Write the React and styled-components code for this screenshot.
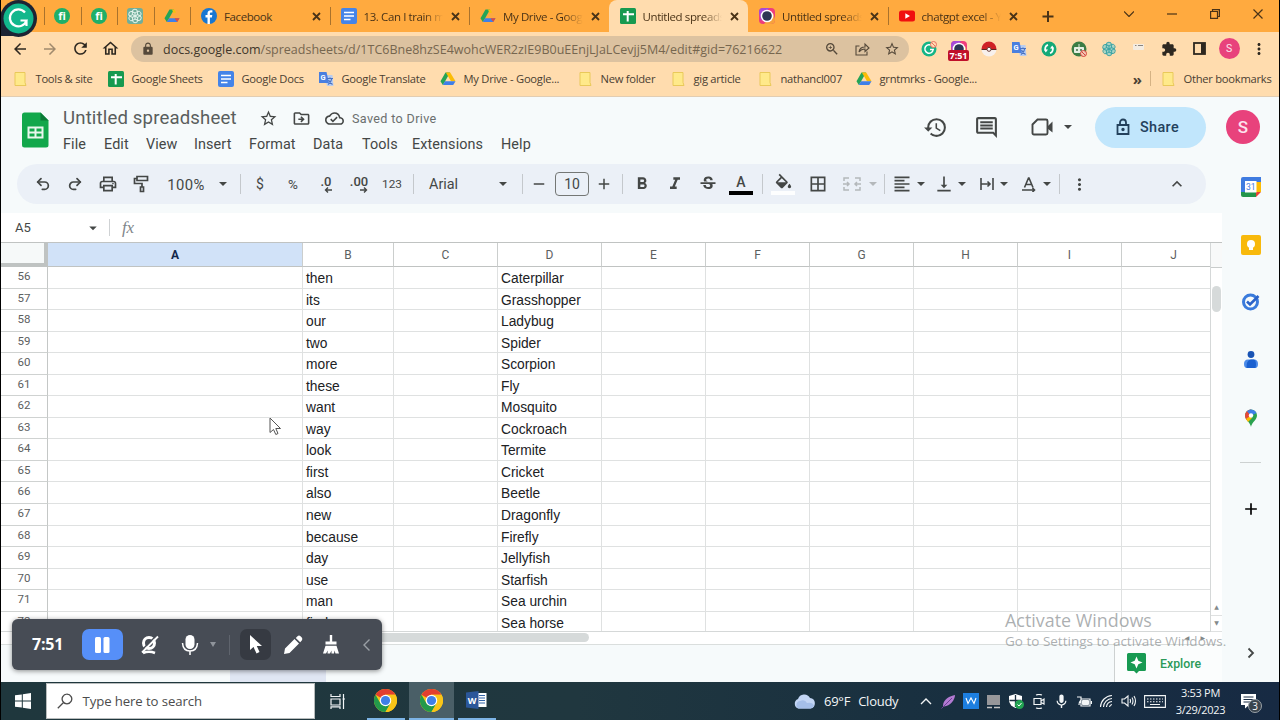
import React from "react";
import styled, { createGlobalStyle, css } from "styled-components";
import {
  MdArrowBack,
  MdArrowForward,
  MdRefresh,
  MdOutlineHome,
  MdLock,
  MdZoomIn,
  MdStarBorder,
  MdExtension,
  MdMoreVert,
  MdOutlineDriveFileMove,
  MdOutlineCloudDone,
  MdHistory,
  MdOutlineComment,
  MdOutlinePrint,
  MdFormatBold,
  MdFormatItalic,
  MdStrikethroughS,
  MdBorderAll,
  MdFormatAlignLeft,
  MdVerticalAlignBottom,
  MdKeyboardArrowUp,
  MdArrowDropDown,
  MdAdd,
  MdRemove,
  MdMic,
} from "react-icons/md";
import { Undo2, Redo2 } from "lucide-react";

const GlobalStyle = createGlobalStyle`
  * { box-sizing: border-box; }
  body {
    margin: 0;
    overflow: hidden;
    font-family: "Open Sans", "Noto Sans", sans-serif;
  }
  svg { display: block; flex-shrink: 0; }
`;

const Frame = styled.div`
  position: relative;
  display: flex;
  flex-direction: column;
  width: 1280px;
  height: 720px;
  overflow: hidden;
  border-left: 1px solid #000;
  border-right: 1px solid #000;
  background: #f6fafb;
`;

/* ---------- browser ---------- */

const TabStrip = styled.div`
  display: flex;
  height: 32px;
  padding-left: 43px;
  background: #ffaa3f;
  color: #4a3317;
`;

const tabBase = css`
  display: flex;
  align-items: center;
  position: relative;
  height: 32px;
  &::before {
    content: "";
    width: 1px;
    height: 18px;
    background: ${(p) => (p.$noLine ? "transparent" : "#a9722c")};
  }
`;

const PinnedTab = styled.div`
  ${tabBase}
  width: 36.5px;
  gap: 9px;
`;

const Tab = styled.div`
  ${tabBase}
  width: 139.5px;
  padding-right: 9px;
  border-radius: 8px 8px 0 0;
  background: ${(p) => (p.$active ? "#ffdcae" : "transparent")};
  svg:first-child {
    margin-left: 10px;
  }
`;

const TabTitle = styled.span`
  flex: 1;
  margin: 0 8px 0 7px;
  overflow: hidden;
  white-space: nowrap;
  font-size: 11.5px;
  letter-spacing: -0.4px;
  mask-image: ${(p) =>
    p.$fade ? "linear-gradient(90deg, #000 76%, transparent 100%)" : "none"};
`;

const NewTab = styled.div`
  display: flex;
  align-items: center;
  width: 80px;
  svg {
    margin-left: 11px;
  }
`;

const WindowButtons = styled.div`
  display: flex;
  align-items: center;
  height: 27px;
  margin-left: auto;
`;

const WindowButton = styled.span`
  display: flex;
  justify-content: center;
  width: 43px;
`;

const AddressRow = styled.div`
  display: flex;
  align-items: center;
  height: 33px;
  padding-left: 4px;
  background: #ffdcae;
  color: #2e2820;
`;

const NavButton = styled.span`
  display: flex;
  justify-content: center;
  width: 30px;
  opacity: ${(p) => (p.$off ? 0.45 : 1)};
`;

const UrlBar = styled.div`
  display: flex;
  align-items: center;
  width: 778px;
  height: 26px;
  margin: 1px 5px 0 6px;
  padding: 0 2px 0 10px;
  border-radius: 13px;
  background: #dcc2a0;
  color: #55493a;
`;

const Url = styled.span`
  flex: 1;
  margin-left: 8px;
  white-space: nowrap;
  font-size: 12.5px;
  color: #76664f;
  b {
    font-weight: 400;
    color: #40362a;
  }
`;

const RecBadge = styled.span`
  position: absolute;
  left: -3px;
  top: 9px;
  width: 21px;
  height: 11px;
  border-radius: 2px;
  background: #c0102a;
  color: #fff;
  font-size: 9px;
  font-weight: 700;
  line-height: 11px;
  text-align: center;
`;

const BadgeHost = styled.span`
  position: relative;
`;

const Avatar = styled.span`
  display: flex;
  align-items: center;
  justify-content: center;
  width: ${(p) => p.$size}px;
  height: ${(p) => p.$size}px;
  border-radius: 50%;
  background: #e8427c;
  color: #fde4ee;
  font-family: Roboto, sans-serif;
  font-size: ${(p) => p.$size / 2}px;
  font-weight: ${(p) => (p.$size > 30 ? 500 : 400)};
`;

const BookmarkRow = styled.div`
  display: flex;
  align-items: center;
  height: 32px;
  padding: 0 5px 4px 11px;
  border-bottom: 1px solid #e2cdb2;
  background: #ffdcae;
  color: #4a4032;
`;

const Bookmark = styled.span`
  display: flex;
  align-items: center;
  gap: 7.5px;
  width: ${(p) => p.$w}px;
  white-space: nowrap;
  font-size: 11.2px;
  letter-spacing: -0.26px;
`;

const Chevrons = styled.span`
  margin-left: auto;
  margin-right: 8px;
  font-size: 15px;
  font-weight: 700;
`;

const BookmarkDivider = styled.span`
  width: 1px;
  height: 15px;
  margin-right: 9px;
  background: #d5b284;
`;

/* ---------- sheet header ---------- */

const Header = styled.header`
  display: flex;
  height: 67px;
  padding: 9px 19px 0 21px;
  color: #444746;
  font-family: Roboto, sans-serif;
`;

const LogoBox = styled.div`
  margin-top: -1px;
`;

const TitleBlock = styled.div`
  margin-left: 14px;
`;

const TitleRow = styled.div`
  display: flex;
  align-items: center;
  height: 24px;
`;

const DocTitle = styled.span`
  width: 196px;
  white-space: nowrap;
  font-size: 18.6px;
  letter-spacing: 0.15px;
  color: #5a5e5d;
`;

const TitleIcon = styled.span`
  width: 33px;
`;

const Saved = styled.span`
  margin: 1px 0 0 -6px;
  font-size: 12.6px;
  letter-spacing: 0.34px;
  color: #6b6f6e;
`;

const MenuRow = styled.nav`
  display: flex;
  margin-top: 5px;
  line-height: 20px;
  font-size: 14.4px;
`;

const MenuItem = styled.span`
  width: ${(p) => p.$w}px;
  letter-spacing: 0.1px;
`;

const HeaderActions = styled.div`
  display: flex;
  align-items: center;
  height: 42px;
  margin-left: auto;
`;

const ActionIcon = styled.span`
  display: flex;
  justify-content: center;
  align-items: center;
  width: 51px;
`;

const MeetIcon = styled(ActionIcon)`
  width: 73px;
  margin-right: 10px;
  padding-left: 6px;
  gap: 9px;
`;

const ShareButton = styled.button`
  display: flex;
  align-items: center;
  justify-content: center;
  gap: 9px;
  width: 111px;
  height: 41px;
  margin-right: 20px;
  padding: 0 7px 0 0;
  border: 0;
  border-radius: 21px;
  background: #c1e6fc;
  color: #23415c;
  font-family: Roboto, sans-serif;
  font-size: 14.4px;
  font-weight: 500;
  letter-spacing: 0.4px;
`;

const Body = styled.div`
  display: flex;
  flex: 1;
  min-height: 0;
`;

const Main = styled.main`
  display: flex;
  flex-direction: column;
  width: 1221px;
`;

/* ---------- toolbar ---------- */

const Toolbar = styled.div`
  display: flex;
  align-items: center;
  flex-shrink: 0;
  width: 1189px;
  height: 40px;
  margin: 0 0 9px 16px;
  padding: 0 14px 0 10px;
  border-radius: 20px;
  background: #ebf0f7;
  color: #444746;
  font-family: Roboto, sans-serif;
`;

const Tool = styled.span`
  display: flex;
  align-items: center;
  justify-content: center;
  flex-shrink: 0;
  width: ${(p) => p.$w}px;
  margin-left: ${(p) => p.$ml || 0}px;
  font-size: ${(p) => p.$size || 13}px;
  font-weight: ${(p) => p.$weight || 400};
  color: ${(p) => (p.$off ? "#b4b8bb" : "inherit")};
`;

const CollapseTool = styled(Tool)`
  margin-left: auto;
`;

const ToolDivider = styled(Tool)`
  &::before {
    content: "";
    width: 1px;
    height: 20px;
    background: #c4c8cc;
  }
`;

const ZoomLevel = styled(Tool)`
  padding-top: 2px;
  letter-spacing: 0.4px;
`;

const FontName = styled(Tool)`
  justify-content: flex-start;
  padding-left: 6px;
`;

const FontSize = styled.span`
  width: 34px;
  height: 24px;
  margin-left: 10px;
  border: 1px solid #747775;
  border-radius: 4px;
  line-height: 23px;
  text-align: center;
  font-size: 14px;
`;

const Decimals = styled.span`
  display: flex;
  flex-direction: column;
  align-items: flex-end;
  line-height: 11px;
  font-size: 13px;
  font-weight: 500;
`;

const ColorBar = styled.span`
  display: flex;
  flex-direction: column;
  align-items: center;
  font-size: 14px;
  font-weight: 500;
  line-height: 16px;
  &::after {
    content: "";
    width: 24px;
    height: 4px;
    margin-top: 1px;
    background: ${(p) => p.$color};
  }
`;

/* ---------- formula bar and grid ---------- */

const FormulaBar = styled.div`
  display: flex;
  align-items: center;
  flex-shrink: 0;
  height: 29px;
  padding-left: 14px;
  background: #fff;
  font-family: Roboto, sans-serif;
  font-size: 13px;
  color: #444746;
`;

const CellName = styled.span`
  width: 69px;
`;

const Fx = styled.i`
  margin-left: 7px;
  padding-left: 12px;
  border-left: 1px solid #cfd2d4;
  line-height: 17px;
  font-family: "Liberation Serif", serif;
  font-size: 17px;
  letter-spacing: -0.2px;
  color: #80868b;
`;

const GridArea = styled.div`
  display: flex;
  height: 390px;
  border-top: 1px solid #c0c3c2;
  background: #fff;
`;

const Grid = styled.div`
  width: 1210px;
  overflow: hidden;
  border-right: 1px solid #d5d8d8;
  border-bottom: 1px solid #d5d8d8;
`;

const columns = "47px 255px 91px 104px 104px 104px 104px 104px 104px 104px 104px";

const HeadRow = styled.div`
  display: grid;
  grid-template-columns: ${columns};
  grid-template-rows: 24px;
  height: 24px;
  font-family: Roboto, sans-serif;
  font-size: 12px;
`;

const Corner = styled.div`
  border-right: 4px solid #bfc3c2;
  border-bottom: 4px solid #bfc3c2;
  background: #f6f9f9;
`;

const HeadCell = styled.div`
  border-right: 1px solid #cbcecd;
  border-bottom: 1px solid #c0c3c2;
  background: ${(p) => (p.$selected ? "#d1e2f8" : "#fff")};
  color: ${(p) => (p.$selected ? "#12284a" : "#5c605f")};
  font-weight: ${(p) => (p.$selected ? 700 : 400)};
  line-height: 25px;
  text-align: center;
`;

const Row = styled.div`
  display: grid;
  grid-template-columns: ${columns};
  grid-template-rows: 21.56px;
  height: 21.56px;
`;

const RowNumber = styled.div`
  border-right: 1px solid #c4c7c6;
  border-bottom: 1px solid #cfd2d1;
  color: #5c605f;
  font-family: Roboto, sans-serif;
  font-size: 11.5px;
  line-height: 19px;
  text-align: center;
`;

const Cell = styled.div`
  padding-left: 3px;
  border-right: 1px solid #dfe1e1;
  border-bottom: 1px solid #dfe1e1;
  color: #202124;
  font-family: "Liberation Sans", Arial, sans-serif;
  font-size: 13.8px;
  line-height: 23.4px;
  white-space: nowrap;
`;

const ScrollTrack = styled.div`
  display: flex;
  flex-direction: column;
  align-items: center;
  width: 11px;
  &::before {
    content: "";
    width: 11px;
    height: 24px;
    border-bottom: 1px solid #c9cccb;
    background: #f8f9f9;
  }
`;

const ScrollThumb = styled.div`
  width: 9px;
  height: 26px;
  margin-top: 18px;
  border-radius: 5px;
  background: #d6dada;
`;

const ScrollArrow = styled.div`
  width: 11px;
  height: 16px;
  margin-top: ${(p) => (p.$first ? "auto" : 0)};
  border-bottom: 1px solid #dfe1e1;
  color: #83898a;
  line-height: 13px;
  text-align: center;
  font-family: "DejaVu Sans", sans-serif;
  font-size: 6px;
`;

const HScroll = styled.div`
  display: flex;
  justify-content: space-between;
  height: 13px;
  padding: 1px 17px 0 50px;
  border-bottom: 1px solid #dadedd;
  background: #fff;
`;

const HThumb = styled.div`
  width: 538px;
  height: 9px;
  border-radius: 5px;
  background: #d6dada;
`;

const HArrows = styled.span`
  color: #83898a;
  font-family: "DejaVu Sans", sans-serif;
  font-size: 6px;
  line-height: 9px;
  word-spacing: 9px;
`;

const SheetBar = styled.div`
  display: flex;
  flex: 1;
  align-items: flex-end;
  justify-content: space-between;
  padding-left: 229px;
`;

const SheetTab = styled.div`
  width: 96px;
  height: 36px;
  background: #e0e6f3;
`;

const Explore = styled.div`
  display: flex;
  align-items: center;
  gap: 14px;
  width: 108px;
  height: 37px;
  padding-left: 12px;
  border-left: 1px solid #cdd1d1;
  background: #fbfdfd;
  color: #2c9a59;
  font-family: Roboto, sans-serif;
  font-size: 12.3px;
  font-weight: 500;
`;

const SidePanel = styled.aside`
  display: flex;
  flex-direction: column;
  align-items: center;
  gap: 37.7px;
  width: 57px;
  padding: 13px 0 23px;
`;

const SideLine = styled.div`
  width: 21px;
  height: 1px;
  margin: -3px 0 -2px;
  background: #cdd1d1;
`;

const SideToggle = styled.span`
  margin-top: auto;
  color: #444746;
`;

/* ---------- taskbar ---------- */

const Taskbar = styled.footer`
  display: flex;
  align-items: center;
  height: 38px;
  background: linear-gradient(90deg, #1f373d 0%, #20373f 45%, #182f40 75%, #172a43 100%);
  color: #f3f6f7;
`;

const StartButton = styled.div`
  display: flex;
  justify-content: center;
  width: 43px;
`;

const SearchBox = styled.div`
  display: flex;
  align-items: center;
  gap: 10px;
  width: 269px;
  height: 36px;
  margin-left: 1.5px;
  padding-left: 10px;
  border: 1px solid #b8bcbc;
  background: #fff;
  color: #4c4c4c;
  font-size: 13.2px;
  letter-spacing: -0.1px;
`;

const TaskIcon = styled.div`
  display: flex;
  align-items: center;
  justify-content: center;
  width: ${(p) => p.$w}px;
  height: 38px;
  margin-left: ${(p) => p.$ml || 0}px;
  border-bottom: ${(p) => (p.$open ? "2px solid #7db4e6" : "0")};
  background: ${(p) => (p.$active ? "#4a5f67" : "transparent")};
`;

const Weather = styled.div`
  display: flex;
  align-items: center;
  gap: 8px;
  width: 122px;
  margin-left: auto;
  white-space: nowrap;
  font-size: 13px;
  letter-spacing: -0.25px;
`;

const Tray = styled.div`
  display: flex;
`;

const TrayIcon = styled.span`
  display: flex;
  align-items: center;
  justify-content: center;
  width: ${(p) => p.$w || 22.5}px;
`;

const Clock = styled.div`
  width: 63px;
  text-align: center;
  font-size: 11px;
  letter-spacing: -0.3px;
  line-height: 17px;
`;

const Notice = styled.div`
  position: relative;
  width: 44px;
  margin-right: 3px;
  padding-left: 9px;
`;

const NoticeCount = styled.span`
  position: absolute;
  left: 16px;
  top: 6px;
  width: 14px;
  height: 14px;
  border: 1px solid #9aa2a8;
  border-radius: 50%;
  background: #39444e;
  font-size: 10px;
  line-height: 12px;
  text-align: center;
`;

/* ---------- things floating over the window ---------- */

const GrammarlyBadge = styled.div`
  position: absolute;
  left: 0;
  top: 0;
`;

const Recorder = styled.div`
  position: absolute;
  left: 11px;
  top: 619px;
  display: flex;
  align-items: center;
  width: 370px;
  height: 51px;
  padding-left: 20px;
  border-radius: 6px;
  background: #474c55;
  box-shadow: 0 1px 5px rgba(0, 0, 0, 0.45);
  color: #fff;
`;

const RecTime = styled.span`
  width: 50px;
  padding-bottom: 2px;
  font-family: "Open Sans", sans-serif;
  font-size: 16px;
  font-weight: 700;
  letter-spacing: -0.2px;
`;

const RecButton = styled.span`
  display: flex;
  align-items: center;
  justify-content: center;
  width: ${(p) => p.$w}px;
  height: 31px;
  margin-left: ${(p) => p.$ml || 0}px;
  border-radius: 7px;
  background: ${(p) => p.$bg || "transparent"};
`;

const RecDivider = styled.span`
  width: 1px;
  height: 20px;
  margin-left: 10px;
  background: #5f646d;
`;

const Watermark = styled.div`
  position: absolute;
  left: 1004px;
  top: 609px;
  white-space: nowrap;
  color: rgba(140, 145, 147, 0.72);
  font-size: 13.5px;
  line-height: 20px;
  div {
    font-size: 17.9px;
    line-height: 22px;
  }
`;

const Pointer = styled.div`
  position: absolute;
  left: 268px;
  top: 417px;
`;

/* ---------- icons ---------- */

const FiverrIcon = () => (
  <svg width="16" height="16" viewBox="0 0 16 16">
    <circle cx="8" cy="8" r="8" fill="#1faf68" />
    <text x="8" y="12" fontSize="11" fontWeight="700" textAnchor="middle" fill="#fff" fontFamily="Open Sans">
      fi
    </text>
  </svg>
);

const GptIcon = ({ size = 16, plain }) => (
  <svg width={size} height={size} viewBox="0 0 16 16">
    {!plain && <rect width="16" height="16" rx="3" fill="#6fae9b" />}
    {plain && <circle cx="8" cy="8" r="6" fill="#a5d3c5" />}
    <g fill="none" stroke={plain ? "#3ba3a5" : "#e4f4ec"} strokeWidth="1">
      {[0, 60, 120, 180, 240, 300].map((a) => (
        <path key={a} d="M8 8V5L10.6 3.4A2.6 2.6 0 0 1 13.4 7.6L10.6 9.4" transform={`rotate(${a} 8 8)`} />
      ))}
    </g>
  </svg>
);

const DriveIcon = ({ dim }) => (
  <svg width="16" height="16" viewBox="0 0 16 16">
    <path d="M5.5 1.5H10L5 10.5L2.8 14L.5 10.2Z" fill="#25a456" />
    {!dim && <path d="M5.8 1.5H10.2L15.5 10.2H11Z" fill="#fbbc05" />}
    <path d="M5 10.2H15.5L13.2 14H2.8Z" fill="#3f7fe8" />
    {dim && <path d="M10.5 10.2H15.5L13.2 14Z" fill="#e5483a" />}
    {dim && <path d="M8 1.5H10.5L12 4.5L9.5 5Z" fill="#f4c20d" />}
  </svg>
);

const FacebookIcon = () => (
  <svg width="16" height="16" viewBox="0 0 16 16">
    <circle cx="8" cy="8" r="8" fill="#1877d2" />
    <path d="M8.900 16V9.400h2l.4-2.400H8.900V5.700c0-.8.4-1.300 1.300-1.300h1.200V2.300C9 1.800 6.500 2.300 6.500 5.300V7h-2v2.400h2V16z" fill="#fff" />
  </svg>
);

const DocsIcon = () => (
  <svg width="16" height="16" viewBox="0 0 16 16">
    <rect width="16" height="16" rx="2" fill="#4584e8" />
    <path d="M3 4.500H13M3 8H13M3 11.500H9.500" stroke="#fff" strokeWidth="1.700" />
  </svg>
);

const SheetsIcon = () => (
  <svg width="16" height="16" viewBox="0 0 16 16">
    <rect width="16" height="16" rx="1.500" fill="#179a50" />
    <path d="M3 6.200H14M7.700 3V13.500" stroke="#fff" strokeWidth="2" />
  </svg>
);

const CameraIcon = () => (
  <svg width="16" height="16" viewBox="0 0 16 16">
    <rect width="16" height="16" rx="4" fill="#ef3d7c" />
    <path d="M0 5V4a4 4 0 0 1 4-4h6L2 13Z" fill="#a64bd8" />
    <path d="M16 11v1a4 4 0 0 1-4 4H5l9-11Z" fill="#f7a13c" />
    <circle cx="8" cy="8" r="6.300" fill="#fff" />
    <circle cx="8" cy="8" r="4.800" fill="#2b3554" />
  </svg>
);

const YoutubeIcon = () => (
  <svg width="16" height="16" viewBox="0 0 16 16">
    <rect y="2.500" width="16" height="11" rx="2.500" fill="#f00f0f" />
    <path d="M6.300 5.300L11 8L6.300 10.700Z" fill="#fff" />
  </svg>
);

const TranslateIcon = () => (
  <svg width="16" height="16" viewBox="0 0 16 16">
    <path d="M6 4H14.500L15.500 15H9Z" fill="#b9cdf0" />
    <path d="M1 1H8.500L11 12H1Z" fill="#4a7fdf" />
    <path d="M9 7.500H15M12 6.500V7.500M10 13.500C12 12 13.500 10 13.800 7.500M10.500 9C11.500 11 13 12.500 14.500 13.500" stroke="#4872c4" strokeWidth="1.200" fill="none" />
    <text x="5" y="9.200" fontSize="7.500" fontWeight="700" textAnchor="middle" fill="#fff" fontFamily="Roboto">
      G
    </text>
  </svg>
);

const FolderIcon = () => (
  <svg width="16" height="16" viewBox="0 0 16 16">
    <path d="M3 1.500H13V11.500L14 14.500H3Z" fill="#ffe98a" stroke="#e9c95a" />
  </svg>
);

const GrammarIcon = () => (
  <svg width="16" height="16" viewBox="0 0 16 16">
    <circle cx="8" cy="8" r="7.500" fill="#15b586" />
    <path d="M11 5A4.200 4.200 0 1 0 12.200 8.500H9" stroke="#fff" strokeWidth="1.500" fill="none" />
    <circle cx="12.500" cy="3.500" r="3" fill="#ffdcae" stroke="#ea6d62" />
    <path d="M10.500 1.500L14.500 5.500" stroke="#ea6d62" />
  </svg>
);

const PokeIcon = () => (
  <svg width="16" height="16" viewBox="0 0 16 16">
    <circle cx="8" cy="8" r="7.500" fill="#f7f0ec" />
    <path d="M.5 8A7.500 7.500 0 0 1 15.500 8Z" fill="#cf2024" />
    <path d="M.5 8.500H15.500" stroke="#5d2620" />
    <circle cx="8" cy="8.300" r="2" fill="#fff" stroke="#6b3a34" />
  </svg>
);

const SyncIcon = () => (
  <svg width="16" height="16" viewBox="0 0 16 16">
    <circle cx="8" cy="8" r="7.500" fill="#14a977" />
    <path d="M7 3.800A4 4 0 0 0 4.800 9.800M9 12.200A4 4 0 0 0 11.200 6.200" stroke="#fff" strokeWidth="1.800" fill="none" />
    <path d="M2.800 8.500H7L4.800 11.500ZM13.200 7.500H9L11.200 4.500Z" fill="#fff" />
  </svg>
);

const RobotIcon = () => (
  <svg width="16" height="16" viewBox="0 0 16 16">
    <circle cx="8" cy="8" r="7.500" fill="#3c7d45" />
    <path d="M3.500 6.500H12.500V11.500H3.500ZM8 3V6" fill="#e5efe3" stroke="#e5efe3" />
    <path d="M6 8V10M10 8V10" stroke="#2c5b34" strokeWidth="1.300" />
    <circle cx="12.500" cy="12.500" r="3" fill="#f3c5b3" stroke="#d4453b" />
    <path d="M10.500 10.500L14.500 14.500" stroke="#d4453b" />
  </svg>
);

const ChromeIcon = () => (
  <svg width="23" height="23" viewBox="0 0 24 24">
    <circle cx="12" cy="12" r="12" fill="#f9c518" />
    <path d="M12 12L1.600 6A12 12 0 0 1 22.400 6H12Z" fill="#e23e30" />
    <path d="M1.600 6A12 12 0 0 0 12 24L17.200 15L12 12L6.800 15Z" fill="#23994b" />
    <path d="M12 6H22.400A12 12 0 0 1 12 24L17.200 15Z" fill="#f9c518" />
    <circle cx="12" cy="12" r="6" fill="#fff" />
    <circle cx="12" cy="12" r="4.800" fill="#3f7fe8" />
  </svg>
);

const BucketIcon = () => (
  <svg width="17" height="17" viewBox="2 0 20 18" fill="currentColor">
    <path d="M16.560 8.940L7.620 0 6.210 1.410l2.380 2.380-5.150 5.150c-.59.59-.59 1.540 0 2.120l5.500 5.500c.29.29.68.44 1.060.44s.77-.15 1.060-.44l5.500-5.500c.59-.58.59-1.530 0-2.120zM5.210 10L10 5.210 14.790 10H5.210zM19 11.500s-2 2.170-2 3.500c0 1.100.9 2 2 2s2-.9 2-2c0-1.330-2-3.500-2-3.500z" />
  </svg>
);

const Caret = () => (
  <svg width="8" height="4" viewBox="0 0 8 4">
    <path d="M0 0H8L4 4Z" fill="currentColor" />
  </svg>
);

const Line = ({ w, h = w, d, sw = 1.6, vb }) => (
  <svg width={w} height={h} viewBox={vb || `0 0 ${w} ${h}`} fill="none" stroke="currentColor" strokeWidth={sw}>
    <path d={d} />
  </svg>
);

const tabs = [
  { title: "Facebook", icon: <FacebookIcon /> },
  { title: "13. Can I train my", icon: <DocsIcon />, fade: true },
  { title: "My Drive - Google", icon: <DriveIcon dim />, fade: true },
  { title: "Untitled spreadsheet", icon: <SheetsIcon />, fade: true, active: true },
  { title: "Untitled spreadsheet", icon: <CameraIcon />, fade: true },
  { title: "chatgpt excel - Yo", icon: <YoutubeIcon />, fade: true },
];

const bookmarks = [
  ["Tools & site", 96, <FolderIcon />],
  ["Google Sheets", 110, <SheetsIcon />],
  ["Google Docs", 100, <DocsIcon />],
  ["Google Translate", 122, <TranslateIcon />],
  ["My Drive - Google...", 137, <DriveIcon />],
  ["New folder", 93, <FolderIcon />],
  ["gig article", 87, <FolderIcon />],
  ["nathancl007", 99, <FolderIcon />],
  ["grntmrks - Google...", 130, <DriveIcon />],
];

const menus = [
  ["File", 41],
  ["Edit", 42],
  ["View", 48],
  ["Insert", 55],
  ["Format", 64],
  ["Data", 49],
  ["Tools", 50],
  ["Extensions", 89],
  ["Help", 40],
];

const rows = [
  [56, "then", "Caterpillar"],
  [57, "its", "Grasshopper"],
  [58, "our", "Ladybug"],
  [59, "two", "Spider"],
  [60, "more", "Scorpion"],
  [61, "these", "Fly"],
  [62, "want", "Mosquito"],
  [63, "way", "Cockroach"],
  [64, "look", "Termite"],
  [65, "first", "Cricket"],
  [66, "also", "Beetle"],
  [67, "new", "Dragonfly"],
  [68, "because", "Firefly"],
  [69, "day", "Jellyfish"],
  [70, "use", "Starfish"],
  [71, "man", "Sea urchin"],
  [72, "find", "Sea horse"],
];

const Browser = () => (
  <>
    <TabStrip>
      <PinnedTab><FiverrIcon /></PinnedTab>
      <PinnedTab><FiverrIcon /></PinnedTab>
      <PinnedTab><GptIcon /></PinnedTab>
      <PinnedTab><DriveIcon dim /></PinnedTab>
      {tabs.map((t, i) => (
        <Tab key={i} $active={t.active} $noLine={i === 3 || i === 4}>
          {t.icon}
          <TabTitle $fade={t.fade}>{t.title}</TabTitle>
          <Line w={9} d="M1 1L8 8M8 1L1 8" sw={1.8} />
        </Tab>
      ))}
      <NewTab>
        <Line w={21} d="M10 5V16M4.500 10.500H15.500" sw={2} />
      </NewTab>
      <WindowButtons>
        <WindowButton><Line w={10} h={6} d="M0 .5L5 5.500L10 .5" sw={1.2} /></WindowButton>
        <WindowButton><Line w={10} h={2} d="M0 1H10" sw={1.2} /></WindowButton>
        <WindowButton><Line w={10} d="M.6 2.500H7.500V9.400H.6ZM2.500 2.500V.6H9.400V7.500H7.500" sw={1.2} /></WindowButton>
        <WindowButton><Line w={10} d="M.5 .5L9.500 9.500M9.500 .5L.5 9.500" sw={1.2} /></WindowButton>
      </WindowButtons>
    </TabStrip>

    <AddressRow>
      <NavButton><MdArrowBack size={18} /></NavButton>
      <NavButton $off><MdArrowForward size={18} /></NavButton>
      <NavButton><MdRefresh size={19} /></NavButton>
      <NavButton><MdOutlineHome size={19} /></NavButton>
      <UrlBar>
        <MdLock size={14} />
        <Url>
          <b>docs.google.com</b>/spreadsheets/d/1TC6Bne8hzSE4wohcWER2zIE9B0uEEnjLJaLCevjj5M4/edit#gid=76216622
        </Url>
        <NavButton><MdZoomIn size={16} /></NavButton>
        <NavButton><Line w={15} h={14} d="M4.500 4H1V13H12V9.500M4 10C4.500 6.500 7 5 10 5V2L14 6L10 9.500V7C7.500 7 5.500 8 4 10Z" sw={1.1} /></NavButton>
        <NavButton><MdStarBorder size={16} /></NavButton>
      </UrlBar>
      <NavButton><GrammarIcon /></NavButton>
      <NavButton><BadgeHost><CameraIcon /><RecBadge>7:51</RecBadge></BadgeHost></NavButton>
      <NavButton><PokeIcon /></NavButton>
      <NavButton><TranslateIcon /></NavButton>
      <NavButton><SyncIcon /></NavButton>
      <NavButton><RobotIcon /></NavButton>
      <NavButton><GptIcon plain /></NavButton>
      <NavButton>
        <svg width="12" height="12" viewBox="0 0 12 12">
          <rect y="1" width="11" height="6" rx="1" fill="#f4ece1" />
          <path d="M2 2.500H3.500M5 2.500H10" stroke="#8a8580" />
        </svg>
      </NavButton>
      <NavButton><MdExtension size={16} /></NavButton>
      <NavButton>
        <svg width="13" height="13" viewBox="0 0 13 13">
          <rect x="1" y="1" width="11" height="11" fill="none" stroke="currentColor" strokeWidth="1.800" />
          <path d="M8 1H12V12H8Z" fill="currentColor" />
        </svg>
      </NavButton>
      <NavButton><Avatar $size={21}>S</Avatar></NavButton>
      <NavButton><MdMoreVert size={18} /></NavButton>
    </AddressRow>

    <BookmarkRow>
      {bookmarks.map(([label, w, icon]) => (
        <Bookmark key={label} $w={w}>{icon}{label}</Bookmark>
      ))}
      <Chevrons>»</Chevrons>
      <BookmarkDivider />
      <Bookmark $w={114}><FolderIcon />Other bookmarks</Bookmark>
    </BookmarkRow>
  </>
);

const SheetHeader = () => (
  <Header>
    <LogoBox>
      <svg width="27" height="44" viewBox="0 0 27 44">
        <path d="M2.500 7.500H18.500L26.500 15.500V40Q26.500 42.500 24 42.500H2.500Q0 42.500 0 40V10Q0 7.500 2.500 7.500Z" fill="#12a74b" />
        <path d="M18.500 7.500L26.500 15.500H18.500Z" fill="#0b7a36" />
        <path d="M5.500 21.500H21.500V33.500H5.500Z" fill="#e9f6ed" />
        <path d="M7.500 23.500H12.500V26.500H7.500ZM14.500 23.500H19.500V26.500H14.500ZM7.500 28.500H12.500V31.500H7.500ZM14.500 28.500H19.500V31.500H14.500Z" fill="#12a74b" />
      </svg>
    </LogoBox>
    <TitleBlock>
      <TitleRow>
        <DocTitle>Untitled spreadsheet</DocTitle>
        <TitleIcon><MdStarBorder size={19} /></TitleIcon>
        <TitleIcon><MdOutlineDriveFileMove size={19} /></TitleIcon>
        <TitleIcon><MdOutlineCloudDone size={19} /></TitleIcon>
        <Saved>Saved to Drive</Saved>
      </TitleRow>
      <MenuRow>
        {menus.map(([label, w]) => (
          <MenuItem key={label} $w={w}>{label}</MenuItem>
        ))}
      </MenuRow>
    </TitleBlock>
    <HeaderActions>
      <ActionIcon><MdHistory size={25} /></ActionIcon>
      <ActionIcon><MdOutlineComment size={25} /></ActionIcon>
      <MeetIcon>
        <svg width="24" height="20" viewBox="0 0 24 20">
          <path d="M6.500 2.500H15Q16.500 2.500 16.500 4V16Q16.500 17.500 15 17.500H3Q1.500 17.500 1.500 16V7.500Z" fill="none" stroke="currentColor" strokeWidth="1.900" />
          <path d="M16.500 9.500L21.500 4.500V15.500L16.500 11.500Z" fill="currentColor" />
        </svg>
        <Caret />
      </MeetIcon>
      <ShareButton>
        <svg width="16" height="18" viewBox="0 0 16 18" fill="none" stroke="currentColor" strokeWidth="1.800">
          <path d="M2.500 7H13.500V16H2.500ZM5 7V4.500A3 3 0 0 1 11 4.500V7" />
          <circle cx="8" cy="11.500" r=".8" />
        </svg>
        Share
      </ShareButton>
      <Avatar $size={34}>S</Avatar>
    </HeaderActions>
  </Header>
);

const SheetToolbar = () => (
  <Toolbar>
    <Tool $w={32}><Undo2 size={16} strokeWidth={2.6} /></Tool>
    <Tool $w={32}><Redo2 size={16} strokeWidth={2.6} /></Tool>
    <Tool $w={34}><MdOutlinePrint size={20} /></Tool>
    <Tool $w={32}><Line w={16} h={18} d="M4 1.500H14.500V5.500H4ZM4 3.500H1.500V8.500H9V12M7.500 12H10.500V16.500H7.500Z" sw={1.7} /></Tool>
    <ZoomLevel $w={58} $size={14.8}>100%</ZoomLevel>
    <Tool $w={16}><Caret /></Tool>
    <ToolDivider $w={18} />
    <Tool $w={22} $size={14}>$</Tool>
    <Tool $w={44} $size={13.5}>%</Tool>
    <Tool $w={22}>
      <Decimals>.0<Line w={8} h={6} d="M8 3H1.500M4 .5L1.500 3L4 5.500" sw={1.4} /></Decimals>
    </Tool>
    <Tool $w={44}>
      <Decimals>.00<Line w={8} h={6} d="M0 3H6.500M4 .5L6.500 3L4 5.500" sw={1.4} /></Decimals>
    </Tool>
    <Tool $w={22} $size={11.8}>123</Tool>
    <ToolDivider $w={20} />
    <FontName $w={72} $size={14.4}>Arial</FontName>
    <Tool $w={16}><Caret /></Tool>
    <ToolDivider $w={22} />
    <Tool $w={12}><MdRemove size={18} /></Tool>
    <FontSize>10</FontSize>
    <Tool $w={30}><MdAdd size={18} /></Tool>
    <ToolDivider $w={6} />
    <Tool $w={34}><MdFormatBold size={20} /></Tool>
    <Tool $w={32}><MdFormatItalic size={20} /></Tool>
    <Tool $w={34}><MdStrikethroughS size={20} /></Tool>
    <Tool $w={32}><ColorBar $color="#000">A</ColorBar></Tool>
    <ToolDivider $w={10} />
    <Tool $w={32}><ColorBar $color="#fdfefe"><BucketIcon /></ColorBar></Tool>
    <Tool $w={38}><MdBorderAll size={20} /></Tool>
    <Tool $w={30} $off><Line w={18} h={14} d="M6 1H1V4M1 10V13H6M12 1H17V4M17 10V13H12M0 7H6M4 5L6 7L4 9M18 7H12M14 5L12 7L14 9" sw={1.5} /></Tool>
    <Tool $w={12} $off><Caret /></Tool>
    <ToolDivider $w={10} />
    <Tool $w={26}><MdFormatAlignLeft size={20} /></Tool>
    <Tool $w={12}><Caret /></Tool>
    <Tool $w={24} $ml={5}><MdVerticalAlignBottom size={20} /></Tool>
    <Tool $w={12}><Caret /></Tool>
    <Tool $w={23} $ml={7}><Line w={14} h={14} d="M1 1V13M13 1V13M1 7H10M7.500 4.500L10 7L7.500 9.500" sw={1.6} /></Tool>
    <Tool $w={12}><Caret /></Tool>
    <Tool $w={24} $ml={7}><Line w={14} h={15} d="M2.500 10.500L6.500 1H7L11 10.500M4 7.500H9.500M0 13H12M10.500 11L12.500 13L10.500 15" sw={1.6} /></Tool>
    <Tool $w={12}><Caret /></Tool>
    <ToolDivider $w={12} />
    <Tool $w={28}><MdMoreVert size={19} /></Tool>
    <CollapseTool $w={30}><MdKeyboardArrowUp size={20} /></CollapseTool>
  </Toolbar>
);

const SheetGrid = () => (
  <GridArea>
    <Grid>
      <HeadRow>
        <Corner />
        {"ABCDEFGHIJ".split("").map((c) => (
          <HeadCell key={c} $selected={c === "A"}>{c}</HeadCell>
        ))}
      </HeadRow>
      {rows.map(([n, b, d]) => (
        <Row key={n}>
          <RowNumber>{n}</RowNumber>
          {["", b, "", d, "", "", "", "", "", ""].map((value, i) => (
            <Cell key={i}>{value}</Cell>
          ))}
        </Row>
      ))}
    </Grid>
    <ScrollTrack>
      <ScrollThumb />
      <ScrollArrow $first>▲</ScrollArrow>
      <ScrollArrow>▼</ScrollArrow>
    </ScrollTrack>
  </GridArea>
);

const Side = () => (
  <SidePanel>
    <svg width="20" height="20" viewBox="0 0 20 20">
      <path d="M0 2Q0 0 2 0H20V5H5V15H0Z" fill="#3f7be0" />
      <path d="M15 5H20V15H15Z" fill="#fbbc04" />
      <path d="M0 15H15V20H2Q0 20 0 18Z" fill="#23954a" />
      <path d="M15 15H20L15 20Z" fill="#ea4335" />
      <path d="M4 4H15.500V15.500H4Z" fill="#fff" />
      <text x="9.800" y="13" fontSize="8.500" textAnchor="middle" fill="#3f7be0" fontFamily="Roboto">31</text>
    </svg>
    <svg width="20" height="20" viewBox="0 0 20 20">
      <rect width="20" height="20" rx="2" fill="#f8b90c" />
      <circle cx="10" cy="9" r="4" fill="#fff" />
      <path d="M8 11H12V15H8Z" fill="#fff" />
    </svg>
    <svg width="20" height="20" viewBox="0 0 20 20">
      <circle cx="9.500" cy="10" r="7" fill="none" stroke="#3a7bdc" strokeWidth="3" />
      <path d="M6 9.500L9 12.500L17.500 4" fill="none" stroke="#2a62c8" strokeWidth="2.600" />
    </svg>
    <svg width="20" height="20" viewBox="0 0 20 20">
      <circle cx="10" cy="4.500" r="3.400" fill="#1853b4" />
      <path d="M3 14Q3 9.500 7 9.500H13Q17 9.500 17 14Q17 18 14 18H6Q3 18 3 14Z" fill="#4a8ae8" />
      <path d="M5.500 18Q5 10 10 9.500H13Q16 11 14.500 18Z" fill="#1a60d0" />
    </svg>
    <svg width="20" height="20" viewBox="0 0 20 20">
      <path d="M10 19C9.500 14.500 4 12 4 7.500A6 6 0 0 1 16 7.500C16 12 10.500 14.500 10 19Z" fill="#2ba24f" />
      <path d="M4 7.500A6 6 0 0 1 10 1.500V7.500L5.500 12Q4 10 4 7.500Z" fill="#e5483a" />
      <path d="M6 3.200A6 6 0 0 1 15.500 5L10 8Z" fill="#3f7fe8" />
      <path d="M5 11L9 8L11 10L7 14Z" fill="#fbbc04" />
      <circle cx="10" cy="7.500" r="2.200" fill="#fff" />
    </svg>
    <SideLine />
    <MdAdd size={20} />
    <SideToggle><Line w={8} h={12} d="M1.500 1.500L6 6L1.500 10.500" sw={1.8} /></SideToggle>
  </SidePanel>
);

const Tasks = () => (
  <Taskbar>
    <StartButton>
      <svg width="16" height="16" viewBox="0 0 16 16" fill="#fff">
        <path d="M0 2.300L6.800 1.400V7.500H0ZM7.800 1.200L16 0V7.500H7.800ZM0 8.500H6.800V14.600L0 13.700ZM7.800 8.500H16V16L7.800 14.800Z" />
      </svg>
    </StartButton>
    <SearchBox>
      <Line w={16} d="M10 1.200A4.800 4.800 0 1 1 9.900 1.200M6.500 9.500L.8 15.200" sw={1.3} />
      Type here to search
    </SearchBox>
    <TaskIcon $w={46}>
      <Line w={16} h={15} d="M1 0V2.500H10V0M1 5H10V11H1ZM1 15V12.800H10V15M13.500 0V15M12.500 5H15" sw={1.2} />
    </TaskIcon>
    <TaskIcon $w={38} $ml={6} $open><ChromeIcon /></TaskIcon>
    <TaskIcon $w={45} $ml={4} $open $active><ChromeIcon /></TaskIcon>
    <TaskIcon $w={38} $ml={4} $open>
      <svg width="21" height="18" viewBox="0 0 21 18">
        <path d="M10 2H20.500V16H10Z" fill="#fff" />
        <path d="M13 4.500H19M13 7H19M13 9.500H19M13 12H19" stroke="#3464a8" />
        <path d="M0 1.500L12.500 0V18L0 16.500Z" fill="#2b579a" />
        <text x="6" y="12.500" fontSize="9" fontWeight="700" textAnchor="middle" fill="#fff" fontFamily="Open Sans">W</text>
      </svg>
    </TaskIcon>
    <Weather>
      <svg width="23" height="16" viewBox="0 0 23 16">
        <path d="M5.500 15.500A5 5 0 0 1 5 6A6.500 6.500 0 0 1 17 5A5.300 5.300 0 0 1 17.500 15.500Z" fill="#c3d6f5" />
        <path d="M5.500 15.500A4 4 0 0 1 7 8Q12 6 14 10Q20 9 21 13Q20 15.500 17.500 15.500Z" fill="#a5bfe9" />
      </svg>
      <span>69°F</span>
      <span>Cloudy</span>
    </Weather>
    <Tray>
      <TrayIcon><Line w={12} h={7} d="M1 6L6 1L11 6" sw={1.4} /></TrayIcon>
      <TrayIcon>
        <svg width="15" height="15" viewBox="0 0 15 15">
          <path d="M2 12C2 5 9 2 14 1C14 6 9 12 3 12.500Z" fill="#b27ad2" />
          <path d="M.5 14.500L11 4" stroke="#6c3f96" />
        </svg>
      </TrayIcon>
      <TrayIcon>
        <svg width="16" height="16" viewBox="0 0 16 16">
          <rect width="16" height="16" fill="#1d7fe0" />
          <path d="M3 5L5 10.500L8 5L11 10.500L13 5" fill="none" stroke="#fff" strokeWidth="1.100" />
        </svg>
      </TrayIcon>
      <TrayIcon>
        <svg width="15" height="15" viewBox="0 0 15 15">
          <rect x="1" y="1" width="13" height="10" fill="#97979a" />
          <path d="M1 13.500H6M8 13.500H14" stroke="#c5c5c5" strokeWidth="1.300" />
        </svg>
      </TrayIcon>
      <TrayIcon>
        <svg width="16" height="16" viewBox="0 0 16 16">
          <path d="M7.500 1L14 3V8Q13 13 7.500 15Q2 13 1 8V3Z" fill="#fff" />
          <path d="M7.500 2V14M1.500 7.500H13.500" stroke="#1c3040" strokeWidth="1.300" />
          <circle cx="11.500" cy="11.500" r="4.500" fill="#22a352" />
          <path d="M9.500 11.500L11 13L13.500 10" stroke="#fff" fill="none" />
        </svg>
      </TrayIcon>
      <TrayIcon><Line w={12} h={15} d="M3 1Q6 0 9 1M1 4.500H8V10.500H1ZM8 7L11 5V10L8 8.500M3 14Q6 15 9 14" sw={1.2} /></TrayIcon>
      <TrayIcon><MdMic size={17} /></TrayIcon>
      <TrayIcon>
        <svg width="16" height="13" viewBox="0 0 16 13" fill="none" stroke="currentColor">
          <path d="M5 4H14V11H5ZM15.500 6V9M1 2H5V5Q3 7 3 10" strokeWidth="1.200" />
          <path d="M6.500 5.500H12.500V9.500H6.500Z" fill="currentColor" />
        </svg>
      </TrayIcon>
      <TrayIcon><Line w={14} d="M1.500 13A12 12 0 0 1 13 1.500M4.500 13A9 9 0 0 1 13 4.500M7.500 13A6 6 0 0 1 13 7.500M10.500 13A3 3 0 0 1 13 10.500" sw={1.1} /></TrayIcon>
      <TrayIcon><Line w={16} h={14} d="M1 5H3.500L7 2V12L3.500 9H1ZM9 5Q10 7 9 9M11 3.500Q13 7 11 10.500M13 2Q16 7 13 12" sw={1.1} /></TrayIcon>
      <TrayIcon $w={29}><Line w={22} h={13} d="M.6 .6H21.400V12.400H.6ZM3 4H4.500M6 4H7.500M9 4H10.500M12 4H13.500M15 4H16.500M18 4H19M3 6.700H4.500M6 6.700H7.500M9 6.700H10.500M12 6.700H13.500M15 6.700H16.500M18 6.700H19M6 9.500H16" sw={1.1} /></TrayIcon>
    </Tray>
    <Clock>3:53 PM<br />3/29/2023</Clock>
    <Notice>
      <svg width="16" height="16" viewBox="0 0 16 16">
        <path d="M0 1H15V12H8L4 15.500V12H0Z" fill="#fff" />
        <path d="M2.500 4H12.500M2.500 6.500H12.500M2.500 9H9" stroke="#1a2d44" />
      </svg>
      <NoticeCount>3</NoticeCount>
    </Notice>
  </Taskbar>
);

const RecorderBar = () => (
  <Recorder>
    <RecTime>7:51</RecTime>
    <RecButton $w={41} $bg="#568ff8">
      <svg width="15" height="16" viewBox="0 0 15 16" fill="#fff">
        <rect width="6" height="16" rx="1.500" />
        <rect x="8.500" width="6" height="16" rx="1.500" />
      </svg>
    </RecButton>
    <RecButton $w={31} $ml={10}>
      <svg width="20" height="20" viewBox="0 0 20 20" fill="none" stroke="#fff" strokeWidth="3">
        <circle cx="10" cy="8" r="5.500" />
        <path d="M4 18Q10 15.500 16 18" strokeWidth="2.500" />
        <path d="M17.500 .5L1.500 16.500" stroke="#474c55" strokeWidth="1.500" />
        <path d="M19 1.500L3 17.500" strokeWidth="1.800" />
      </svg>
    </RecButton>
    <RecButton $w={31} $ml={10}>
      <svg width="18" height="20" viewBox="0 0 18 20">
        <rect x="4.500" y="0" width="9" height="14" rx="4.500" fill="#fff" />
        <path d="M1.500 8Q2 16 9 16Q16 16 16.500 8M9 16V20" fill="none" stroke="#fff" strokeWidth="1.500" />
      </svg>
    </RecButton>
    <RecButton $w={12} $ml={2}>
      <svg width="6" height="5" viewBox="0 0 6 5"><path d="M0 0H6L3 5Z" fill="#8f949b" /></svg>
    </RecButton>
    <RecDivider />
    <RecButton $w={31} $ml={10} $bg="#363a42">
      <svg width="14" height="19" viewBox="0 0 14 19">
        <path d="M1 0V15L4.500 12L7.500 18.500L10.500 17L7.800 11H13Z" fill="#fff" />
      </svg>
    </RecButton>
    <RecButton $w={37} $ml={3}>
      <svg width="20" height="20" viewBox="0 0 20 20" fill="#fff">
        <path d="M1 19L2 13.500L11.500 4L16 8.500L6.500 18ZM12.800 3L14.500 1.200Q16 0 17.500 1.200L18.800 2.500Q20 4 18.800 5.500L17.200 7.200Z" />
      </svg>
    </RecButton>
    <RecButton $w={37} $ml={1}>
      <svg width="16" height="19" viewBox="0 0 16 19" fill="#fff">
        <path d="M6.800 0H9.200V6.500H13.500V9.500H2.500V6.500H6.800ZM2.500 10.800H13.500L16 18.500H12.500L11.500 15.500L11 18.500H8.500V15.500L7 18.500H4.500L4.800 15.500L3 18.500H0Z" />
      </svg>
    </RecButton>
    <RecButton $w={20} $ml={7}>
      <svg width="7" height="12" viewBox="0 0 7 12"><path d="M6.500 .5L1 6L6.500 11.500" fill="none" stroke="#9a9fa5" strokeWidth="1.400" /></svg>
    </RecButton>
  </Recorder>
);

const App = () => (
  <>
    <GlobalStyle />
    <Frame>
      <Browser />
      <SheetHeader />
      <Body>
        <Main>
          <SheetToolbar />
          <FormulaBar>
            <CellName>A5</CellName>
            <MdArrowDropDown size={18} />
            <Fx>fx</Fx>
          </FormulaBar>
          <SheetGrid />
          <HScroll>
            <HThumb />
            <HArrows>◀ ▶</HArrows>
          </HScroll>
          <SheetBar>
            <SheetTab />
            <Explore>
              <svg width="19" height="21" viewBox="0 0 19 21">
                <path d="M1.500 0H17.500Q19 0 19 1.500V16.500Q19 18 17.500 18H12L9.500 20.500L7 18H1.500Q0 18 0 16.500V1.500Q0 0 1.500 0Z" fill="#189a52" />
                <path d="M9.500 3.500L11.300 7.700L15.500 9.500L11.300 11.300L9.500 15.500L7.700 11.300L3.500 9.500L7.700 7.700Z" fill="#fff" />
              </svg>
              Explore
            </Explore>
          </SheetBar>
        </Main>
        <Side />
      </Body>
      <Tasks />

      <GrammarlyBadge>
        <svg width="38" height="38" viewBox="0 0 38 38">
          <path d="M0 18V36H18Z" fill="#1c2434" />
          <circle cx="17.500" cy="18.500" r="18.500" fill="#1c2434" />
          <circle cx="17.500" cy="18.500" r="15" fill="#12b78c" />
          <path d="M24 12.500A8.500 8.500 0 1 0 25.500 20.500H19.500M25.500 20V26" fill="none" stroke="#fff" strokeWidth="2.200" />
        </svg>
      </GrammarlyBadge>
      <Pointer>
        <svg width="13" height="19" viewBox="0 0 13 19">
          <path d="M1 1V15.500L4.500 12.500L6.800 17.500L9 16.500L6.800 11.500H11.500Z" fill="#fff" stroke="#555" />
        </svg>
      </Pointer>
      <Watermark>
        <div>Activate Windows</div>
        Go to Settings to activate Windows.
      </Watermark>
      <RecorderBar />
    </Frame>
  </>
);

export default App;
